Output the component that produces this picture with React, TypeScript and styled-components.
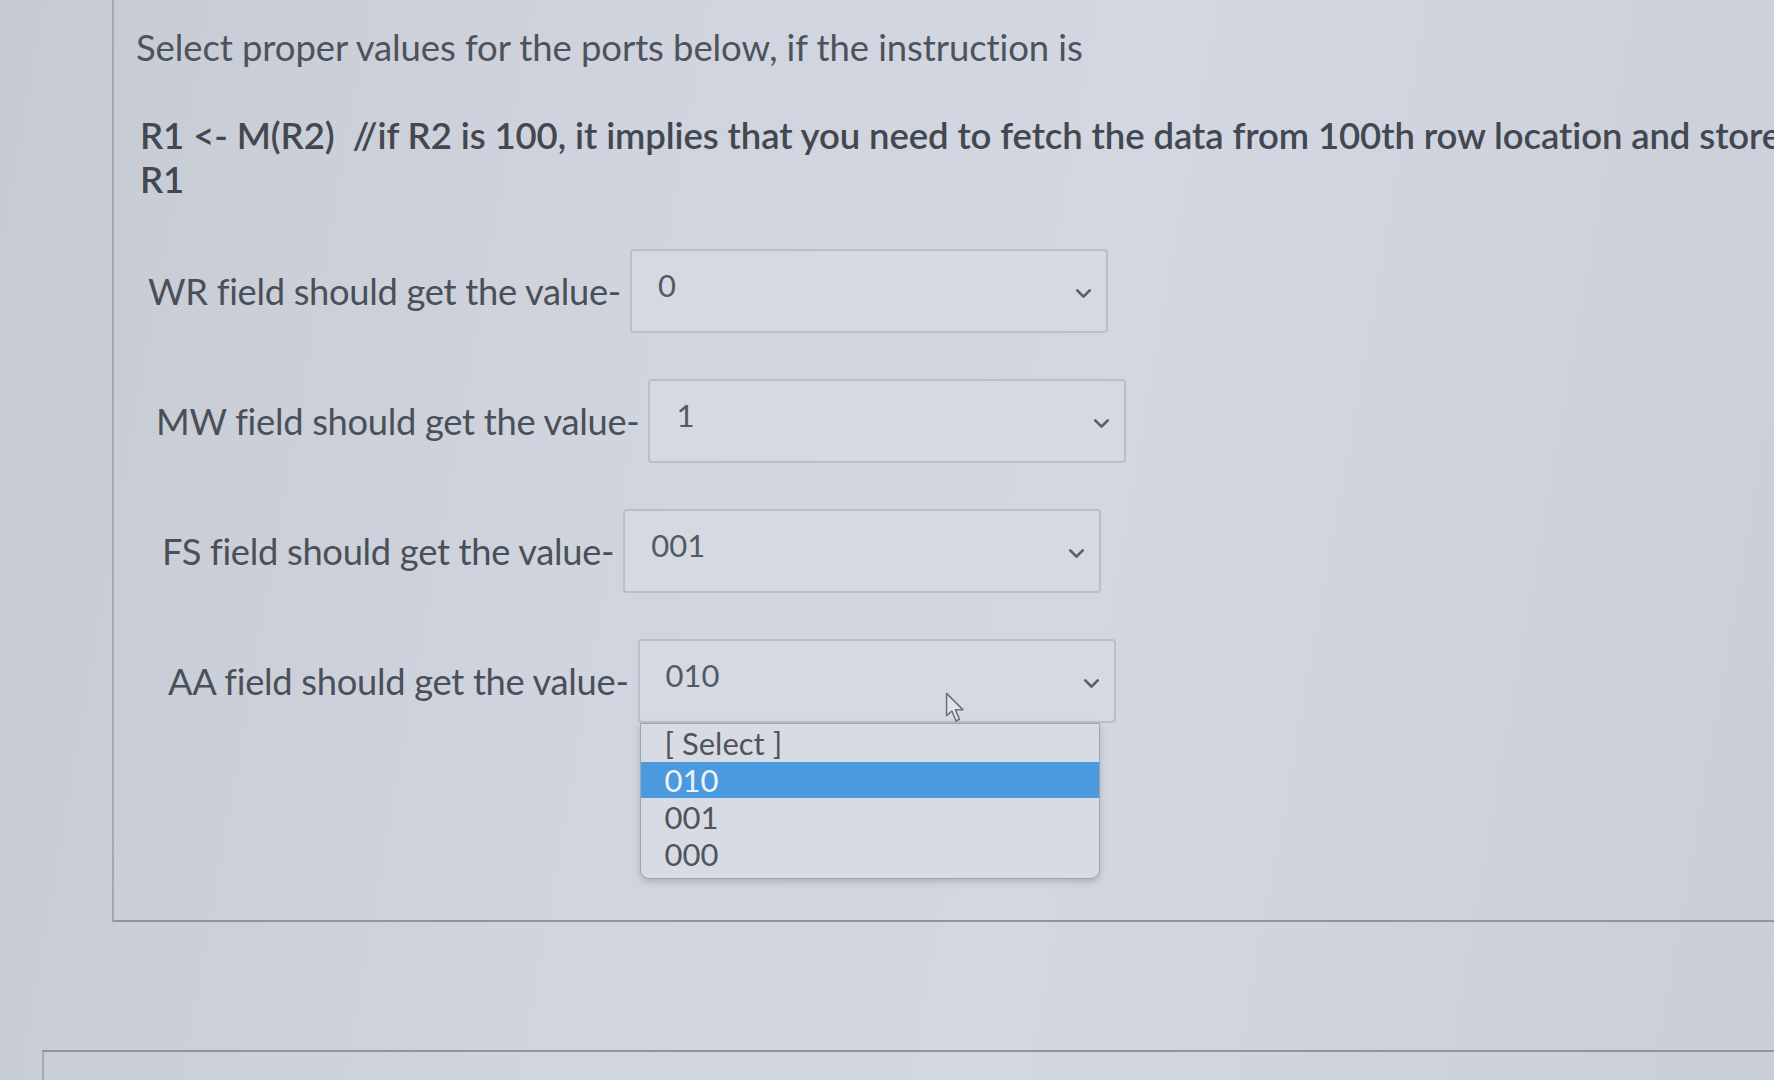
import React from 'react';
import styled, { createGlobalStyle } from 'styled-components';
import { ChevronDown } from 'lucide-react';

const GlobalStyle = createGlobalStyle`
  html, body {
    margin: 0;
    padding: 0;
    height: 100%;
    overflow: hidden;
  }
  body {
    font-family: Lato, "Open Sans", "Liberation Sans", sans-serif;
    background: linear-gradient(100deg, #c6cad3 0%, #cfd4de 35%, #d2d7e1 60%, #c9ced8 100%);
    color: #4b4f57;
  }
`;

type Field = {
  label: string;
  value: string;
};

const fields: Field[] = [
  { label: 'WR field should get the value-', value: '0' },
  { label: 'MW field should get the value-', value: '1' },
  { label: 'FS field should get the value-', value: '001' },
  { label: 'AA field should get the value-', value: '010' },
];

const options = ['[ Select ]', '010', '001', '000'];

const App: React.FC = () => {
  return (
    <>
      <GlobalStyle />
      <Page>
        <QuestionCard>
          <Prompt>Select proper values for the ports below, if the instruction is</Prompt>
          <Instruction>
            <NoWrap>
              R1 &lt;- M(R2)&nbsp; //if R2 is 100, it implies that you need to fetch the data from 100th row location and store
            </NoWrap>
            <br />
            R1
          </Instruction>

          <FieldList>
            {fields.map((f, i) => (
              <FieldRow key={f.label} $indent={[12, 20, 26, 32][i]}>
                <FieldLabel>{f.label}</FieldLabel>
                <SelectWrap>
                  <SelectBox>
                    <SelectValue>{f.value}</SelectValue>
                    <ChevronDown size={25} strokeWidth={2.6} color="#5a5e66" />
                  </SelectBox>
                  {i === fields.length - 1 && (
                    <>
                      <Cursor viewBox="0 0 20 28" width="24" height="33">
                        <path
                          d="M2 2 L2 21 L6.5 17 L10 25.5 L13 24 L9.5 16 L16 16 Z"
                          fill="#dfe3ea"
                          stroke="#6b7079"
                          strokeWidth="1.3"
                          strokeLinejoin="round"
                        />
                      </Cursor>
                      <OptionList>
                        {options.map((o) => (
                          <OptionItem key={o} $active={o === f.value}>
                            {o}
                          </OptionItem>
                        ))}
                      </OptionList>
                    </>
                  )}
                </SelectWrap>
              </FieldRow>
            ))}
          </FieldList>
        </QuestionCard>
        <NextCard />
      </Page>
    </>
  );
};

export default App;

const Page = styled.div`
  width: 100%;
  height: 1080px;
  padding-left: 112px;
  box-sizing: border-box;
`;

const QuestionCard = styled.div`
  height: 922px;
  box-sizing: border-box;
  border-left: 2px solid #a3a8b2;
  border-bottom: 2px solid #8f959f;
  padding: 24px 0 0 22px;
`;

const Prompt = styled.p`
  margin: 0;
  font-size: 36.5px;
  line-height: 46px;
  letter-spacing: -0.1px;
  color: #4e525a;
`;

const Instruction = styled.p`
  margin: 43px 0 0 4px;
  font-size: 36.5px;
  line-height: 44px;
  letter-spacing: -0.1px;
  color: #43474f;
  font-weight: 600;
`;

const NoWrap = styled.span`
  white-space: nowrap;
`;

const FieldList = styled.div`
  margin-top: 48px;
  display: flex;
  flex-direction: column;
  gap: 46px;
`;

const FieldRow = styled.div<{ $indent: number }>`
  display: flex;
  align-items: center;
  gap: 9px;
  padding-left: ${({ $indent }) => $indent}px;
`;

const FieldLabel = styled.span`
  font-size: 36.3px;
  letter-spacing: -0.3px;
  color: #4b4f57;
`;

const SelectWrap = styled.div`
  position: relative;
`;

const SelectBox = styled.div`
  width: 478px;
  height: 84px;
  box-sizing: border-box;
  border: 2px solid #b9bec8;
  border-radius: 4px;
  background: #d4d9e2;
  display: flex;
  align-items: center;
  justify-content: space-between;
  padding: 0 10px 12px 26px;
  svg {
    margin-top: 16px;
  }
`;

const SelectValue = styled.span`
  font-size: 31px;
  color: #555a62;
`;

const Cursor = styled.svg`
  position: absolute;
  left: 306px;
  top: 52px;
  z-index: 3;
`;

const OptionList = styled.div`
  position: absolute;
  left: 2px;
  top: 84px;
  width: 460px;
  box-sizing: border-box;
  background: #d7dce4;
  border: 1.5px solid #9fa5af;
  border-radius: 0 0 9px 9px;
  box-shadow: 0 3px 6px rgba(70, 76, 90, 0.25);
  padding: 1px 0 5px;
  z-index: 2;
`;

const OptionItem = styled.div<{ $active: boolean }>`
  height: 36px;
  line-height: 36px;
  padding-left: 24px;
  font-size: 31px;
  color: ${({ $active }) => ($active ? '#eef3fa' : '#50545c')};
  background: ${({ $active }) => ($active ? '#4b99df' : 'transparent')};
  margin-bottom: 1px;
`;

const NextCard = styled.div`
  margin: 128px 0 0 -70px;
  height: 60px;
  border-top: 2px solid #8f959f;
  border-left: 2px solid #a3a8b2;
`;
